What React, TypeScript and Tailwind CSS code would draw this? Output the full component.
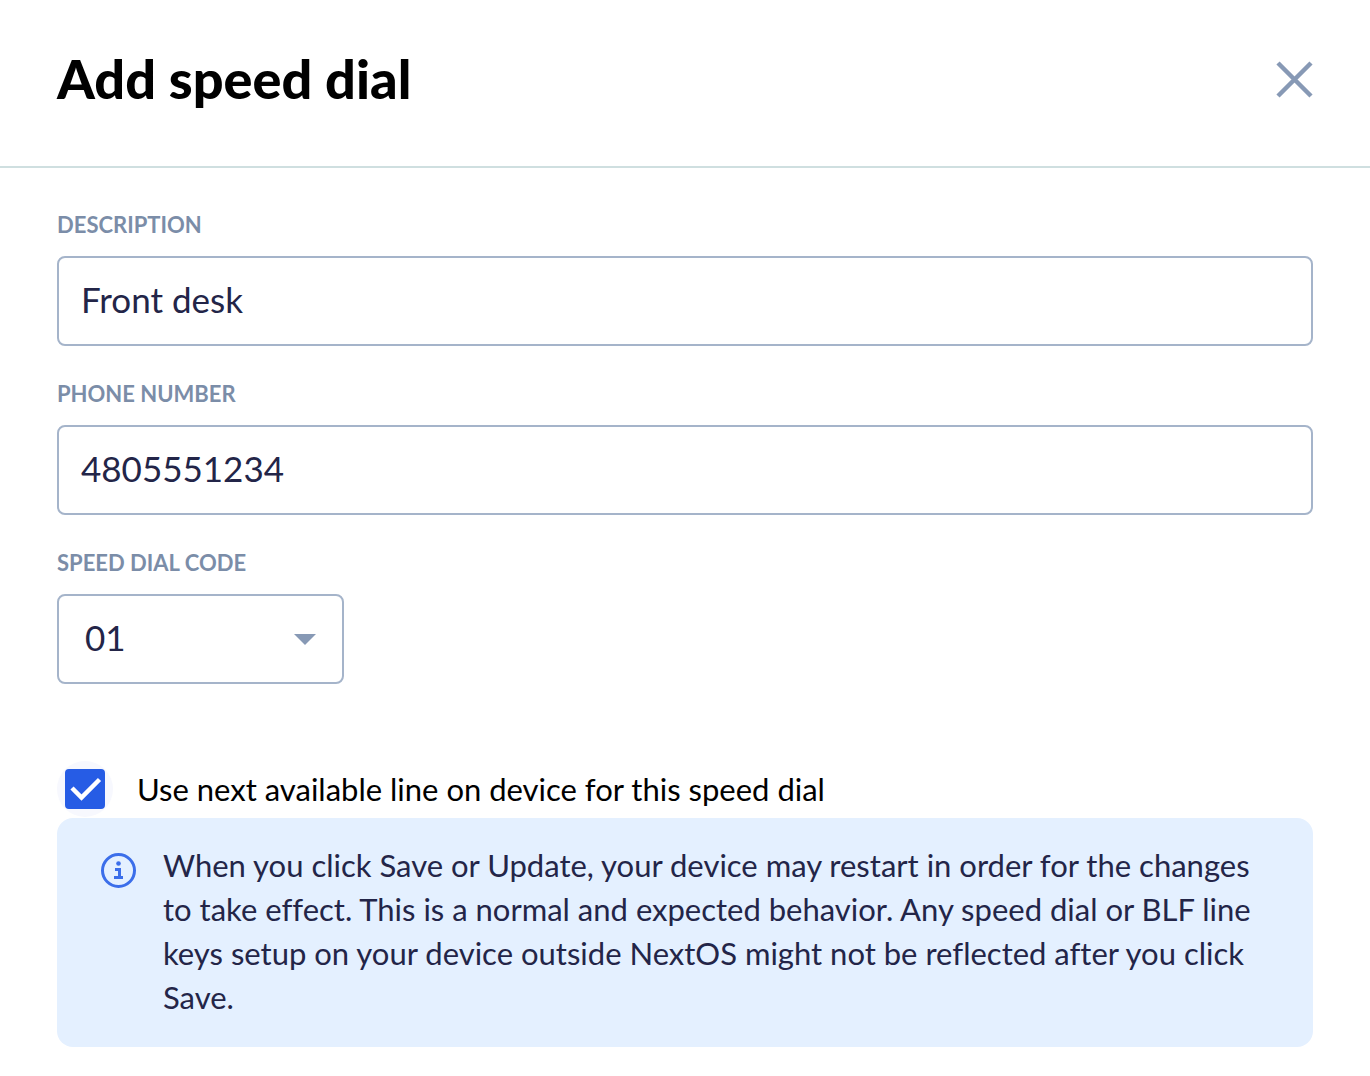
import { useState } from "react";

const inputClass =
  "block h-[90px] w-full rounded-lg border-2 border-[#a5b4ca] bg-white px-[22px] pb-1 text-[35px] text-[#232548] outline-none";

const labelClass = "mb-[18px] block text-[22px] leading-[26px] font-bold uppercase text-[#7b8da8]";

const App = () => {
  const [description, setDescription] = useState("Front desk");
  const [phone, setPhone] = useState("4805551234");
  const [code, setCode] = useState("01");
  const [useNextLine, setUseNextLine] = useState(true);

  return (
    <main className="min-h-screen bg-white font-['Lato',sans-serif] text-black">
      <header className="flex items-center justify-between border-b-2 border-[#cfdfe0] px-[57px] pt-[47px] pb-[55px]">
        <h1 className="text-[54px] leading-16 font-black">Add speed dial</h1>
        <button type="button" aria-label="Close" className="text-[#8799b5]">
          <svg
            width="38"
            height="38"
            viewBox="0 0 38 38"
            fill="none"
            stroke="currentColor"
            strokeWidth="4.500"
          >
            <path d="M3 3 36 36M36 3 3 36" />
          </svg>
        </button>
      </header>

      <form className="px-[57px] pt-11 pb-7">
        <div className="mb-[35px]">
          <label htmlFor="description" className={labelClass}>Description</label>
          <input
            id="description"
            type="text"
            className={inputClass}
            value={description}
            onChange={(e) => setDescription(e.target.value)}
          />
        </div>

        <div className="mb-[35px]">
          <label htmlFor="phone" className={labelClass}>Phone number</label>
          <input
            id="phone"
            type="text"
            className={inputClass}
            value={phone}
            onChange={(e) => setPhone(e.target.value)}
          />
        </div>

        <div className="mb-19">
          <label htmlFor="code" className={labelClass}>Speed dial code</label>
          <div className="relative w-[287px]">
            <select
              id="code"
              className="block h-[90px] w-full appearance-none rounded-lg border-2 border-[#a5b4ca] bg-white px-[26px] pb-1 text-[35px] text-[#232548] outline-none"
              value={code}
              onChange={(e) => setCode(e.target.value)}
            >
              <option>01</option>
              <option>02</option>
              <option>03</option>
            </select>
            <svg
              className="pointer-events-none absolute top-10 right-7 text-[#8799b5]"
              width="22"
              height="11"
              viewBox="0 0 22 11"
              fill="currentColor"
            >
              <path d="M0 0h22L11 11z" />
            </svg>
          </div>
        </div>

        <label className="flex h-[58px] items-center gap-6 text-[31px]">
          <span className="relative rounded-full bg-[#f7f8fe] p-2">
            <input
              type="checkbox"
              className="block size-10 appearance-none rounded-sm border-2 border-[#265ce5] checked:bg-[#265ce5]"
              checked={useNextLine}
              onChange={(e) => setUseNextLine(e.target.checked)}
            />
            {useNextLine && (
              <svg
                className="pointer-events-none absolute inset-2"
                viewBox="0 0 40 40"
                fill="none"
                stroke="white"
                strokeWidth="4.500"
              >
                <path d="m7 19 9.500 9.500L34.500 10.500" />
              </svg>
            )}
          </span>
          Use next available line on device for this speed dial
        </label>

        <div className="flex gap-[26px] rounded-2xl bg-[#e4f0ff] pt-[25px] pr-8 pb-7 pl-11 text-[#232548]">
          <svg
            className="mt-[9px] size-9 shrink-0 text-[#3b6eea]"
            viewBox="0 0 36 36"
            fill="none"
            stroke="currentColor"
            strokeWidth="3"
          >
            <circle cx="17.500" cy="18.500" r="16" />
            <circle cx="17.500" cy="11.500" r="2.300" fill="currentColor" stroke="none" />
            <path d="M14 17.500h4.500v8M13 25.500h9" />
          </svg>
          <p className="text-[31px] leading-11 [font-variant-ligatures:none]">
            When you click Save or Update, your device may restart in order for the changes to take
            effect. This is a normal and expected behavior. Any speed dial or BLF line keys setup on
            your device outside NextOS might not be reflected after you click Save.
          </p>
        </div>
      </form>
    </main>
  );
};

export default App;
